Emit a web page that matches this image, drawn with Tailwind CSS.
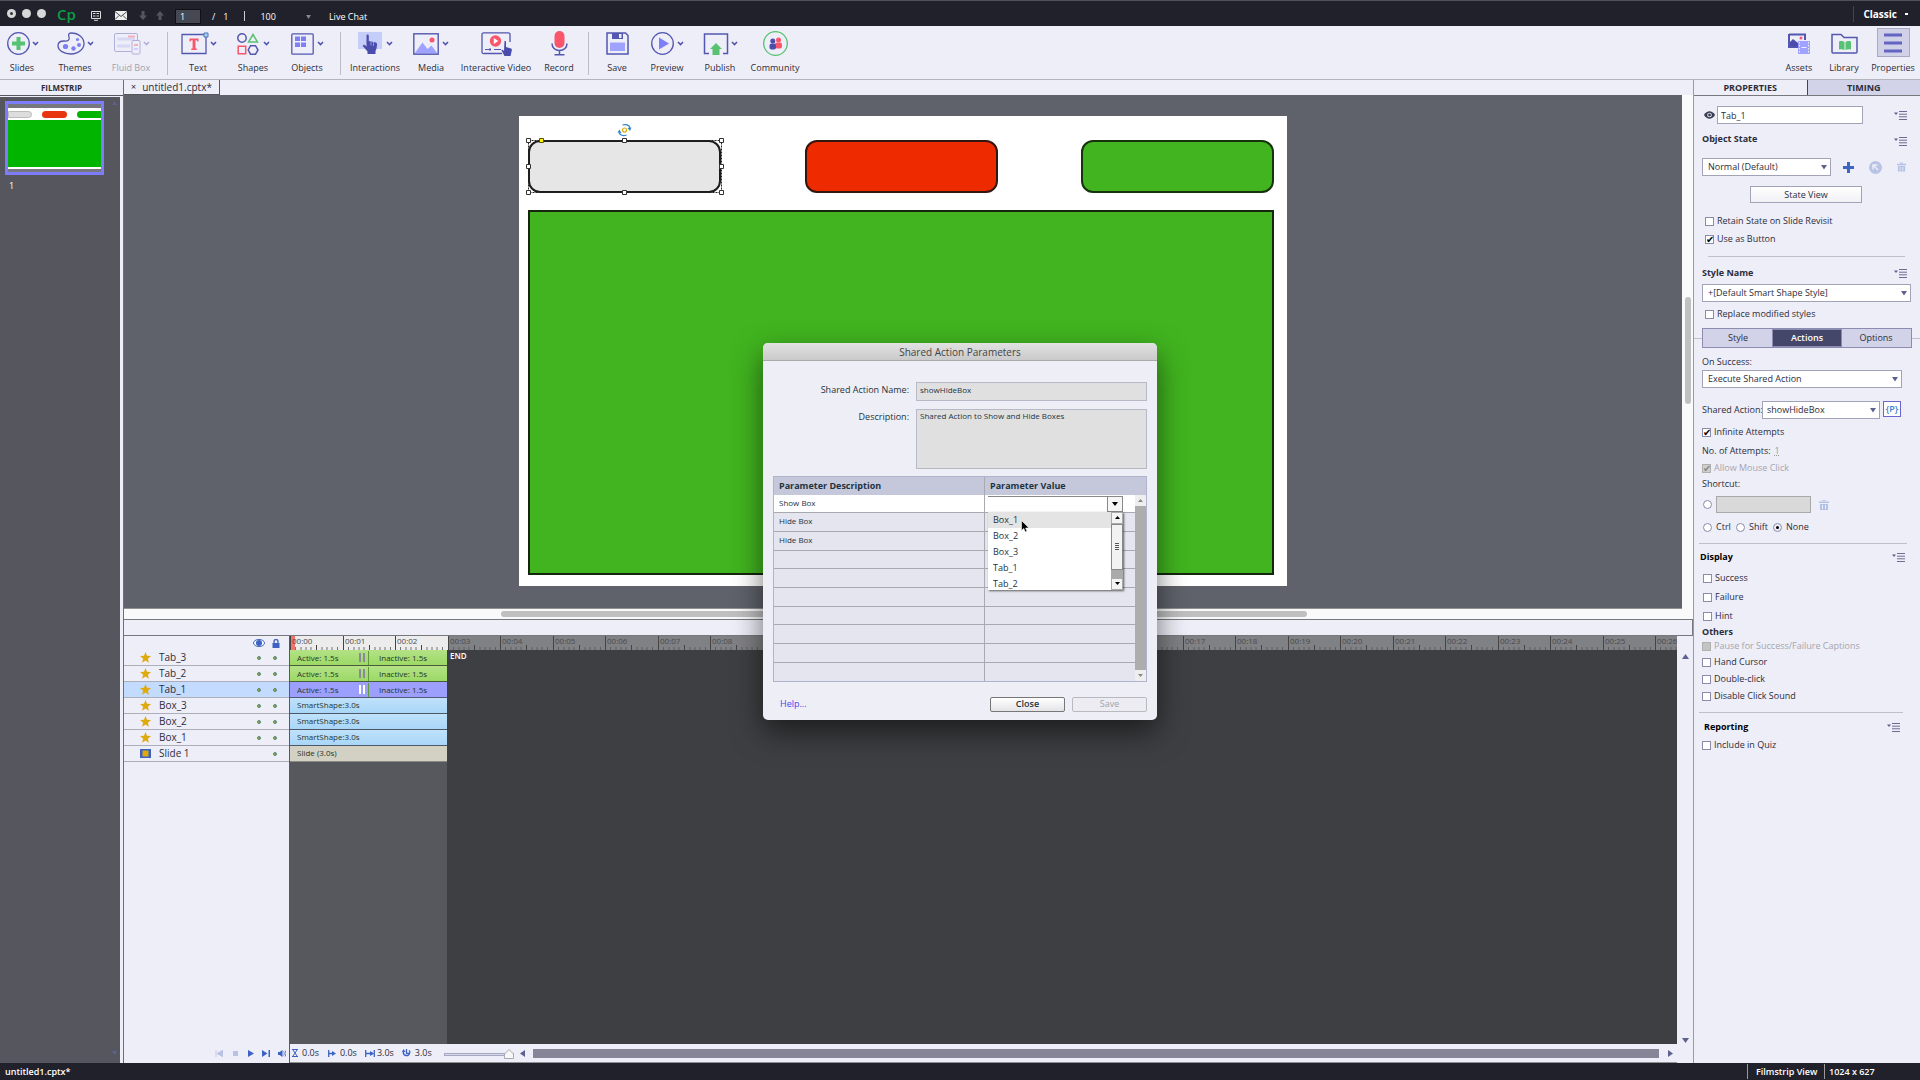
<!DOCTYPE html>
<html lang="en">

<head>
    <meta charset="UTF-8" />
    <title>untitled1.cptx*</title>
    <script src="https://cdn.jsdelivr.net/npm/@tailwindcss/browser@4"></script>
</head>

<body class="h-screen flex flex-col overflow-hidden bg-[#eeeef8] text-[9px] leading-4 text-[#2c2d3a] font-['Open_Sans','Noto_Sans',sans-serif]">

    <!-- shared icons -->
    <svg class="hidden">
        <symbol id="chev" viewBox="0 0 7 5"><path d="M1 1l2.500 2.500L6 1" fill="none" stroke="#5053ae" stroke-width="1.600" /></symbol>
        <symbol id="arrow" viewBox="0 0 6 5"><path d="M0 0h6L3 4.500z" fill="#5d6190" /></symbol>
        <symbol id="panelmenu" viewBox="0 0 13 9"><path d="M0 1.500h4L2 4z" fill="#5d6190" /><path d="M5 .5h8M5 3.200h8M5 5.800h8M5 8.500h8" stroke="#6b6d92" /></symbol>
        <symbol id="trash" viewBox="0 0 10 10"><path d="M0 1.500h10v1.500H0zM3.500 0h3v1h-3zM1 4h8v6H1z" fill="#b3c1e6" /><path d="M3.500 5v4M6.500 5v4" stroke="#eeeef8" /></symbol>
        <symbol id="star" viewBox="0 0 11 11"><path d="M5.500 0l1.500 3.800 4 .3-3.100 2.600 1 4-3.400-2.200-3.400 2.200 1-4L0 4.100l4-.3z" fill="#dfab0b" /></symbol>
    </svg>

    <header class="h-[26px] shrink-0 flex items-center bg-[#20212b] border-t border-[#50525a] text-white">
        <div class="flex gap-1 pl-[7px]">
            <button aria-label="Close" class="size-[9px] rounded-full bg-[#d8d8d8] grid place-items-center"><span class="size-[3px] rounded-full bg-[#333]"></span></button>
            <button aria-label="Minimize" class="size-[9px] rounded-full bg-[#d8d8d8] ml-0.5"></button>
            <button aria-label="Zoom" class="size-[9px] rounded-full bg-[#d8d8d8] ml-0.5"></button>
        </div>
        <span class="ml-[11px] w-[18px] text-[15px] leading-5 font-semibold text-[#0d9c45]">Cp</span>
        <svg class="ml-4 mt-1 w-[10px] h-[10px]" viewBox="0 0 10 10"><path d="M.5.500h9v7h-9z" fill="none" stroke="#ddd" /><path d="M2 2.500h2.500M5.500 2.500H8M2 5h2.500M5.500 5H8" stroke="#ddd" /><path d="M3 9.300h4" stroke="#ddd" /></svg>
        <svg class="ml-[14px] mt-1 w-[12px] h-[9px]" viewBox="0 0 12 9"><path d="M0 0h12v9H0z" fill="#eee" /><path d="M0 .5l6 5 6-5M0 8.500l4-4M12 8.500l-4-4" fill="none" stroke="#20212b" stroke-width=".8" /></svg>
        <svg class="ml-3 mt-1 w-2 h-[9px]" viewBox="0 0 8 9"><path d="M2.500 0h3v4.500H8L4 9 0 4.500h2.500z" fill="#55565c" /></svg>
        <svg class="ml-[9px] mt-1 w-2 h-[9px]" viewBox="0 0 8 9"><path d="M2.500 9h3V4.500H8L4 0 0 4.500h2.500z" fill="#55565c" /></svg>
        <input aria-label="Slide" value="1" class="ml-[11px] mt-1.5 w-[26px] h-[15px] px-1 bg-[#464853] border border-[#111218]" />
        <span class="ml-[11px] mt-1.5">/</span><span class="ml-2 mt-1.5">1</span>
        <span class="ml-4 mt-1 w-px h-[10px] bg-[#ccc]"></span>
        <span class="ml-[15px] mt-1.5">100</span>
        <svg class="ml-[30px] mt-1.5 w-[5px] h-1" viewBox="0 0 6 5"><path d="M0 0h6L3 5z" fill="#888" /></svg>
        <span class="ml-[18px] mt-1.5">Live Chat</span>
        <span class="ml-auto w-px h-4 bg-[#44464f]"></span>
        <button class="ml-[9px] mr-3 flex items-center text-[10px] font-bold">Classic<span class="ml-2 w-[3px] h-0.5 bg-white"></span></button>
    </header>

    <nav class="h-[54px] shrink-0 flex pt-px pb-[3px] border-b border-[#b4b4bd]">
        <button class="w-11 flex flex-col items-center">
            <span class="flex items-center gap-0.5 pl-0.5 h-[35px]"><svg class="w-[23px] h-[23px]" viewBox="0 0 23 23"><circle cx="11.500" cy="11.500" r="10.800" fill="none" stroke="#5457b0" stroke-width="1.300" /><path d="M9.500 5h4v4.500H18v4h-4.500V18h-4v-4.500H5v-4h4.500z" fill="#57c271" /></svg><svg class="w-[7px] h-[5px]"><use href="#chev" /></svg></span>
            <span>Slides</span>
        </button>
        <button class="w-[62px] flex flex-col items-center">
            <span class="flex items-center gap-0.5 h-[35px]"><svg class="w-[28px] h-[23px]" viewBox="0 0 28 23"><path d="M14 1c8 0 13 5 13 10.500S21.500 22 14 22C7 22 1 18.500 1 13.500c0-3.500 3-4.500 6-4.500 4 .5 6-1 5-4-.8-2-.5-4 2-4z" fill="none" stroke="#5457b0" stroke-width="1.300" /><g fill="#7c7ff5"><circle cx="8.500" cy="14.500" r="2.600" /><circle cx="16.500" cy="16.500" r="2.200" /><circle cx="22" cy="13" r="2" /><circle cx="20.500" cy="7.500" r="1.600" /></g></svg><svg class="w-[7px] h-[5px]"><use href="#chev" /></svg></span>
            <span>Themes</span>
        </button>
        <button disabled class="w-[50px] flex flex-col items-center opacity-40">
            <span class="flex items-center gap-0.5 pl-0.5 h-[33px]"><svg class="w-[27px] h-[22px]" viewBox="0 0 27 22"><path d="M17 18.500H2a1.500 1.500 0 0 1-1.500-1.500V2A1.500 1.500 0 0 1 2 .5h20A1.500 1.500 0 0 1 23.500 2v5" fill="none" stroke="#5457b0" /><path d="M3 6h18M3 13h13" stroke="#b7b9f5" stroke-width="3" /><path d="M14 3.500h7" stroke="#f9566b" stroke-width="2" /><rect x="18" y="7.500" width="8" height="13.500" rx="1" fill="#eeeef8" stroke="#5457b0" /><path d="M20 12h4" stroke="#f9566b" stroke-width="2" /><path d="M20 16h4" stroke="#9fa2ff" stroke-width="2" /></svg><svg class="w-[7px] h-[5px]"><use href="#chev" /></svg></span>
            <span>Fluid Box</span>
        </button>
        <span class="ml-[11px] mr-[10px] mt-[5px] w-px h-[43px] bg-[#bcbcc6]"></span>
        <button class="w-10 flex flex-col items-center">
            <span class="flex items-center gap-px pl-0.5 h-[35px]"><svg class="w-[28px] h-[23px]" viewBox="0 0 28 23"><path d="M1 2.500h24v19H1z" fill="none" stroke="#5457b0" stroke-width="1.300" /><path d="M8.500 6.500h9v3h-1l-.7-1.300h-1.300v8.300h1.300v1.500h-5.500v-1.500h1.300V8.200h-1.300L9.500 9.500h-1z" fill="#f9566b" /><path d="M23 1h4v4h-4z" fill="#a9d1f5" stroke="#4f74b4" /></svg><svg class="w-[7px] h-[5px]"><use href="#chev" /></svg></span>
            <span>Text</span>
        </button>
        <button class="w-[70px] flex flex-col items-center">
            <span class="flex items-center gap-1 h-[35px]"><svg class="w-[22px] h-[22px]" viewBox="0 0 22 22" fill="none" stroke-width="1.500"><circle cx="5" cy="5" r="4.200" stroke="#5457b0" /><path d="M16 1.500L20.500 9h-9z" stroke="#57c271" /><path d="M1.200 13.200h7.500v7.500H1.200z" stroke="#f9566b" /><path d="M13.500 12.700h5L21 17l-2.500 4.200h-5L11.200 17z" stroke="#5457b0" /></svg><svg class="w-[7px] h-[5px]"><use href="#chev" /></svg></span>
            <span>Shapes</span>
        </button>
        <button class="w-[38px] flex flex-col items-center">
            <span class="flex items-center gap-[3px] h-[35px]"><svg class="w-[23px] h-[22px]" viewBox="0 0 23 22"><rect x=".8" y=".8" width="21.400" height="20.400" rx="1" fill="none" stroke="#5457b0" stroke-width="1.300" /><path d="M4 3.500h5v4.500H4zM10 3.500h5v4.500h-5zM4 9.500h5V14H4zM10 9.500h5V14h-5z" fill="#7c7ff5" /></svg><svg class="w-[7px] h-[5px]"><use href="#chev" /></svg></span>
            <span>Objects</span>
        </button>
        <span class="ml-[14px] mr-1.5 mt-[5px] w-px h-[43px] bg-[#bcbcc6]"></span>
        <button class="w-14 flex flex-col items-center">
            <span class="flex items-center gap-1 h-[35px]"><svg class="w-[24px] h-[23px]" viewBox="0 0 24 23"><path d="M0 0h24v17H0z" fill="#c5cdf9" /><path d="M8.500 3.500c0-1.500 2.300-1.500 2.300 0V9l7 1.500c.8.300 1.200.8 1.200 1.600 0 3-.5 5-1.500 7V22H9.500v-2.500L5 14.200c-.7-1 .7-2 1.700-1.300l1.800 1.600z" fill="#4a4dab" /><path d="M13 9.500v4M15.500 10v4" stroke="#c5cdf9" stroke-width=".6" /></svg><svg class="w-[7px] h-[5px]"><use href="#chev" /></svg></span>
            <span>Interactions</span>
        </button>
        <button class="w-14 flex flex-col items-center">
            <span class="flex items-center gap-[3px] h-[35px]"><svg class="w-[26px] h-[22px]" viewBox="0 0 26 22"><path d="M1.500 20.500l8-11 5 6.500 4-3.500 6 8z" fill="#9fa2ff" /><circle cx="19" cy="7" r="2.500" fill="#f9566b" /><rect x=".8" y=".8" width="24.400" height="20.400" fill="none" stroke="#5457b0" stroke-width="1.400" /></svg><svg class="w-[7px] h-[5px]"><use href="#chev" /></svg></span>
            <span>Media</span>
        </button>
        <button class="w-[74px] flex flex-col items-center">
            <span class="flex items-center h-[35px]"><svg class="w-[31px] h-[24px]" viewBox="0 0 31 24"><path d="M21 21.500H3A1.500 1.500 0 0 1 1 20V2A1.500 1.500 0 0 1 2.500.8h25A1.500 1.500 0 0 1 29 2v8" fill="none" stroke="#5457b0" stroke-width="1.300" /><circle cx="14.500" cy="9" r="5.700" fill="#f9566b" /><path d="M12.800 6v6l4.500-3z" fill="#fff" /><path d="M4 17.500h6M13 17.500h7M9 16v3" stroke="#5457b0" /><path d="M23.500 9c.8-.3 1.500 0 1.500 1v5l5 1.500c1 .5.800 1 .8 2L29.500 24h-6L20.500 18.500c0-1 1-1 2.500.5z" fill="#4a4dab" /></svg></span>
            <span>Interactive Video</span>
        </button>
        <button class="w-[52px] flex flex-col items-center">
            <span class="flex items-center h-[35px]"><svg class="w-[17px] h-[25px]" viewBox="0 0 17 25"><rect x="3.500" y="0" width="10" height="17" rx="5" fill="#f9566b" /><path d="M1 12.500c0 4 3 7 7.500 7s7.500-3 7.500-7M8.500 19.500V24M3.500 23.800h10" fill="none" stroke="#5457b0" stroke-width="1.500" /></svg></span>
            <span>Record</span>
        </button>
        <span class="mx-[3px] mt-[5px] w-px h-[43px] bg-[#bcbcc6]"></span>
        <button class="w-[50px] flex flex-col items-center">
            <span class="flex items-center h-[35px]"><svg class="w-[23px] h-[23px]" viewBox="0 0 23 23"><path d="M1 1h18.500L22 3.500V22H1z" fill="none" stroke="#5457b0" stroke-width="1.500" /><path d="M6 1h11v6H6z" fill="#5457b0" /><path d="M13 2h2.500v4H13z" fill="#eeeef8" /><path d="M4 10.500h15v8.500H4z" fill="#9fa2ff" /></svg></span>
            <span>Save</span>
        </button>
        <button class="w-[50px] flex flex-col items-center">
            <span class="flex items-center gap-[3px] h-[35px]"><svg class="w-[23px] h-[23px]" viewBox="0 0 23 23"><circle cx="11.500" cy="11.500" r="10.800" fill="none" stroke="#5457b0" stroke-width="1.300" /><path d="M8 5.500v12l10-6z" fill="#7c7ff5" /></svg><svg class="w-[7px] h-[5px]"><use href="#chev" /></svg></span>
            <span>Preview</span>
        </button>
        <button class="w-14 flex flex-col items-center">
            <span class="flex items-center gap-0.5 h-[35px]"><svg class="w-[26px] h-[22px]" viewBox="0 0 26 22"><path d="M6 20.500H1.500V1h23v19.500H20" fill="none" stroke="#5457b0" stroke-width="1.500" /><path d="M13 10l6 6h-2.500v6h-7v-6H7z" fill="#57c271" /></svg><svg class="w-[7px] h-[5px]"><use href="#chev" /></svg></span>
            <span>Publish</span>
        </button>
        <button class="w-[54px] flex flex-col items-center">
            <span class="flex items-center h-[35px]"><svg class="w-[25px] h-[25px]" viewBox="0 0 25 25"><circle cx="12.500" cy="12.500" r="11.800" fill="none" stroke="#57c271" stroke-width="1.300" /><g fill="#f9566b"><circle cx="15.500" cy="9" r="2.500" /><rect x="12" y="11.500" width="7" height="6" rx="2" /></g><g fill="#4a4dab"><circle cx="9.800" cy="10" r="2.500" /><rect x="6.500" y="12.500" width="6.500" height="6" rx="2" /></g></svg></span>
            <span>Community</span>
        </button>
        <button class="ml-auto w-[42px] flex flex-col items-center">
            <span class="flex items-center h-[35px]"><svg class="w-[22px] h-[22px]" viewBox="0 0 22 22"><path d="M1 1.500h16V7M1 1v13h9" fill="none" stroke="#5457b0" stroke-width="2" /><path d="M2 13V9l3-3 5 4v4z" fill="#4a4dab" /><circle cx="13" cy="5" r="1.500" fill="#f9566b" /><path d="M10 8h12v13H10z" fill="#9fa2ff" /><path d="M11.500 9v12M20.500 9v12" stroke="#eeeef8" stroke-dasharray="1.500 1.500" /><path d="M13.500 14.500h5" stroke="#eeeef8" /></svg></span>
            <span>Assets</span>
        </button>
        <button class="w-12 flex flex-col items-center">
            <span class="flex items-center h-[35px]"><svg class="w-[27px] h-[21px]" viewBox="0 0 27 21"><path d="M1 19V1.500h9l3 3h13V19a1 1 0 0 1-1 1H2a1 1 0 0 1-1-1z" fill="none" stroke="#5457b0" stroke-width="1.500" /><path d="M8 8.500c2-.7 4-.7 5.500.5V17c-1.500-1-3.500-1-5.500-.5zM14.500 9c1.500-1.200 3.500-1.200 5.500-.5v8c-2-.5-4-.5-5.500.5z" fill="#57c271" /></svg></span>
            <span>Library</span>
        </button>
        <button class="w-[50px] mr-0.5 pt-px flex flex-col items-center">
            <span class="grid place-items-center w-[33px] h-[31px] mb-[3px] bg-[#d0d0e6] border border-[#a9a9c4]"><svg class="w-[18px] h-[20px]" viewBox="0 0 18 20"><path d="M0 2h18M0 10h18M0 18h18" stroke="#6265c4" stroke-width="3" /></svg></span>
            <span>Properties</span>
        </button>
    </nav>

    <main class="flex-1 min-h-0 flex">

        <!-- filmstrip -->
        <aside class="w-[124px] shrink-0 flex flex-col border-r border-[#6d6d72]">
            <h2 class="h-4 text-center font-bold text-[8px] border-b border-[#55565c]">FILMSTRIP</h2>
            <div class="flex-1 mt-px mr-[3px] pl-[5px] pr-[3px] pt-1 pb-2 bg-[#56565e] flex items-stretch justify-between text-white">
                <div>
                    <div class="w-[99px] h-[74px] border-3 border-[#7d7dfb] bg-[#77787e] pt-1">
                        <div class="bg-white pb-0.5 overflow-hidden">
                            <div class="flex gap-[10px] pt-[3px] pb-0.5">
                                <span class="w-6 h-[7px] rounded-r-sm bg-[#ddd] border border-[#bbb]"></span>
                                <span class="w-[25px] h-[7px] rounded-sm bg-[#e93411]"></span>
                                <span class="flex-1 h-[7px] rounded-l-sm bg-[#00b400]"></span>
                            </div>
                            <div class="h-[47px] bg-[#00b400]"></div>
                        </div>
                    </div>
                    <p class="ml-1 mt-[3px] text-[9px]">1</p>
                </div>
                <div class="w-[5px] flex flex-col justify-between">
                    <svg class="w-[5px] h-1" viewBox="0 0 5 4"><path d="M0 4h5L2.500 0z" fill="#5d6190" /></svg>
                    <svg class="w-[5px] h-1" viewBox="0 0 5 4"><path d="M0 0h5L2.500 4z" fill="#5d6190" /></svg>
                </div>
            </div>
        </aside>

        <div class="flex-1 min-w-0 flex flex-col">
            <div class="h-[15px] shrink-0 flex">
                <button class="w-[96px] pl-[7px] flex items-center gap-1.5 text-[10px] border-r border-b border-[#55565c] whitespace-nowrap"><span class="text-[9px]">×</span>untitled1.cptx*</button>
            </div>

            <!-- stage -->
            <div class="flex bg-[#fafafa] shrink-0">
                <div class="flex-1 flex justify-center pt-[21px] pb-[22px] bg-[#5f626a] border-b border-[#8f9195]">
                    <div class="w-[768px] h-[470px] pl-[9px] pr-[13px] pt-6 pb-[11px] flex flex-col gap-[17px] bg-white">
                        <div class="flex justify-between">
                            <div class="relative w-[193px] h-[53px] rounded-xl bg-[#e6e6e6] border-2 border-[#1c1c1c]">
                                <svg class="absolute -left-1 -top-[19px] w-[198px] h-[72px]" viewBox="0 0 198 72">
                                    <path d="M2.500 17.500h193v52h-193z" fill="none" stroke="#222" stroke-width="1" stroke-dasharray="2 1" />
                                    <g fill="#fff" stroke="#333"><path d="M.5 15.500h4v4h-4zM96.500 15.500h4v4h-4zM193.500 15.500h4v4h-4zM.5 41.500h4v4h-4zM193.500 41.500h4v4h-4zM.5 67.500h4v4h-4zM96.500 67.500h4v4h-4zM193.500 67.500h4v4h-4z" /></g>
                                    <path d="M13.500 15.500h4v4h-4z" fill="#fff200" stroke="#555500" />
                                    <circle cx="98.500" cy="7" r="2" fill="#fff" stroke="#dfab0b" stroke-width="1.200" />
                                    <path d="M93 9.500c1 2.500 4 4 7.500 2.500M104 5C103 2 100 .8 96.500 2" fill="none" stroke="#3084cc" stroke-width="1.300" />
                                    <path d="M91.500 9.500l2-3 2 3.500zM105.500 4.500l-1.500 3.500-2.500-3z" fill="#3084cc" />
                                </svg>
                            </div>
                            <div class="w-[193px] h-[53px] rounded-xl bg-[#ee2a00] border-2 border-[#33170f]"></div>
                            <div class="w-[193px] h-[53px] rounded-xl bg-[#41b41f] border-2 border-[#16330e]"></div>
                        </div>
                        <div class="flex-1 bg-[#41b41f] border-2 border-[#14270d]"></div>
                    </div>
                </div>
                <div class="w-[11px] pt-[202px] pl-[3px]"><div class="w-1.5 h-[107px] rounded-full bg-[#c0c0c0]"></div></div>
            </div>
            <div class="h-[10px] shrink-0 flex items-center justify-center pr-[10px] bg-[#fafafa]"><div class="w-[806px] h-1.5 rounded-full bg-[#bfbfbf]"></div></div>
            <div class="h-[17px] shrink-0 border-y border-r border-[#77787e]"></div>

            <!-- timeline -->
            <section class="flex-1 min-h-0 flex">
                <div class="w-[166px] shrink-0 flex flex-col border-r border-[#a03a3e]">
                    <div class="h-[14px] flex items-center justify-end gap-[7px] pr-[9px]">
                        <svg class="w-3 h-2" viewBox="0 0 12 8"><ellipse cx="6" cy="4" rx="5.500" ry="3.500" fill="#fff" stroke="#3c62c2" /><circle cx="6" cy="4" r="3" fill="#3c62c2" /></svg>
                        <svg class="w-2 h-[9px]" viewBox="0 0 8 9"><path d="M2 4V2.500a2 2 0 0 1 4 0V4" fill="none" stroke="#3c62c2" stroke-width="1.300" /><path d="M.5 4h7v5h-7z" fill="#3c62c2" /></svg>
                    </div>
                    <ul id="layers"></ul>
                    <div class="mt-auto h-5 flex items-center justify-end gap-2 pr-[3px]">
                        <svg class="w-2 h-[7px]" viewBox="0 0 8 7"><path d="M1 0v7M8 0v7L2 3.500z" fill="#b9c1e4" stroke="#b9c1e4" stroke-width=".8" /></svg>
                        <svg class="w-[5px] h-[5px] mx-0.5" viewBox="0 0 5 5"><path d="M0 0h5v5H0z" fill="#b9c1e4" /></svg>
                        <svg class="w-1.5 h-[7px]" viewBox="0 0 6 7"><path d="M0 0v7l6-3.500z" fill="#3c62c2" /></svg>
                        <svg class="w-2 h-[7px]" viewBox="0 0 8 7"><path d="M0 0v7l5.500-3.500zM6.500 0H8v7H6.500z" fill="#3c62c2" /></svg>
                        <svg class="w-2 h-[7px]" viewBox="0 0 8 7"><path d="M0 2h1.500L4.500 0v7L1.500 5H0z" fill="#3c62c2" /><path d="M5.500 1.500c1 1 1 3 0 4M7 .5c1.300 2 1.300 4 0 6" fill="none" stroke="#3c62c2" stroke-width=".8" /></svg>
                    </div>
                </div>

                <div class="flex-1 min-w-0 flex flex-col">
                    <div id="ruler" class="h-[14px] shrink-0 flex overflow-hidden bg-[#808184] text-[8px] leading-[10px] text-[#4a4a4e]"></div>
                    <div class="flex-1 min-h-0 flex bg-[#3e3f42]">
                        <div id="bars" class="w-[157px] bg-[#57585d] text-[8px] leading-[14px] text-[#25352a]"></div>
                        <span class="pl-[3px] text-white text-[8px] font-semibold leading-3">END</span>
                    </div>
                    <div class="h-[19px] shrink-0 flex items-center border-b border-[#8f9195]">
                        <svg class="ml-0.5 w-1.5 h-2" viewBox="0 0 6 8"><path d="M0 .5h6M0 7.500h6M1 1l4 6M5 1L1 7" stroke="#3c62c2" /></svg><span class="ml-1">0.0s</span>
                        <svg class="ml-[9px] w-2 h-[7px]" viewBox="0 0 8 7"><path d="M.7 0v7M1 3.500h4" stroke="#3c62c2" stroke-width="1.300" /><path d="M4 1l4 2.500L4 6z" fill="#3c62c2" /></svg><span class="ml-1">0.0s</span>
                        <svg class="ml-2 w-[10px] h-[7px]" viewBox="0 0 10 7"><path d="M.7 0v7M9.300 0v7M1 3.500h7" stroke="#3c62c2" stroke-width="1.300" /><path d="M5 1l4 2.500L5 6z" fill="#3c62c2" /></svg><span class="ml-0.5">3.0s</span>
                        <svg class="ml-2 w-[9px] h-2" viewBox="0 0 9 8"><path d="M1.500 2.500c-1 4 5.500 6.500 6.300 1 .2-1-.3-1.500-.8-2M4.500 0v4.500H7" fill="none" stroke="#3c62c2" stroke-width="1.300" /><path d="M0 3l1.500-3 2 3z" fill="#3c62c2" /></svg><span class="ml-1">3.0s</span>
                        <div class="relative ml-3 w-[70px] h-4 flex items-center">
                            <span class="w-full h-[3px] mt-0.5 border border-[#a5a6c2] bg-[#d7d8e8]"></span>
                            <input type="range" aria-label="Timeline zoom" value="100" class="absolute inset-0 w-full opacity-0" />
                            <svg class="absolute right-0 top-1 w-[10px] h-[10px]" viewBox="0 0 10 10"><path d="M5 .5l4.500 4.500v4.500h-9V5z" fill="#f7f7f7" stroke="#a9a9b5" /></svg>
                        </div>
                        <svg class="ml-1.5 w-[5px] h-[7px]" viewBox="0 0 5 7"><path d="M5 0v7L0 3.500z" fill="#5d6190" /></svg>
                        <div class="ml-2 flex-1 h-[9px] bg-[#868597]"></div>
                        <svg class="ml-[9px] mr-1 w-[5px] h-[7px]" viewBox="0 0 5 7"><path d="M0 0v7l5-3.500z" fill="#5d6190" /></svg>
                    </div>
                </div>
                <div class="w-4 shrink-0 flex flex-col items-center justify-between pt-[18px] pb-5">
                    <svg class="w-[7px] h-[5px]" viewBox="0 0 7 5"><path d="M0 5h7L3.500 0z" fill="#5d6190" /></svg>
                    <svg class="w-[7px] h-[5px]" viewBox="0 0 7 5"><path d="M0 0h7L3.500 5z" fill="#5d6190" /></svg>
                </div>
            </section>
        </div>

        <!-- properties panel -->
        <aside class="w-[227px] shrink-0 flex flex-col border-l border-[#9a9aa4]">
            <div class="h-4 shrink-0 flex font-bold border-b border-[#77787e]">
                <button class="flex-1">PROPERTIES</button>
                <button class="flex-1 bg-[#d2d2e8] border-l border-[#44464f]">TIMING</button>
            </div>
            <div class="flex-1 flex flex-col pl-2 pr-[13px]">
                <div class="mt-[10px] flex items-center">
                    <svg class="ml-0.5 w-[11px] h-2" viewBox="0 0 11 8"><path d="M0 4c3-5 8-5 11 0-3 5-8 5-11 0z" fill="#3a3c52" /><circle cx="5.500" cy="4" r="2.300" fill="#eeeef8" /><circle cx="5.500" cy="4" r="1.400" fill="#3a3c52" /></svg>
                    <input aria-label="Item name" value="Tab_1" class="ml-0.5 w-[146px] h-[18px] px-[3px] bg-white border border-[#a3a3b8]" />
                    <svg class="ml-auto w-[13px] h-[9px]"><use href="#panelmenu" /></svg>
                </div>
                <div class="mt-[7px] flex items-center justify-between"><h3 class="font-bold">Object State</h3><svg class="w-[13px] h-[9px] mt-1"><use href="#panelmenu" /></svg></div>
                <div class="mt-[11px] flex items-center">
                    <div class="relative">
                        <select aria-label="Object State" class="appearance-none w-[129px] h-[18px] pl-[5px] block bg-white border border-[#a3a3b8]"><option>Normal (Default)</option></select>
                        <svg class="absolute right-1 top-[7px] w-1.5 h-[5px]"><use href="#arrow" /></svg>
                    </div>
                    <svg class="ml-3 w-[11px] h-[11px]" viewBox="0 0 11 11"><path d="M4 0h3v4h4v3H7v4H4V7H0V4h4z" fill="#3c66c4" /></svg>
                    <svg class="ml-[15px] w-[13px] h-[13px]" viewBox="0 0 13 13"><circle cx="6.500" cy="6.500" r="6.500" fill="#b9c3e4" /><path d="M4 8.500V4h4.500M4.300 4.300L9 9" fill="none" stroke="#eeeef8" stroke-width="1.400" /></svg>
                    <svg class="ml-auto mr-px w-[9px] h-[10px]"><use href="#trash" /></svg>
                </div>
                <button class="mt-[10px] ml-12 w-28 h-[17px] leading-[15px] bg-linear-to-b from-white to-[#f1f1f6] border border-[#a3a3b8]">State View</button>
                <label class="mt-[10px] ml-[3px] flex items-center gap-[3px]"><input type="checkbox" class="appearance-none size-[9px] bg-white border border-[#8a8ba8]" />Retain State on Slide Revisit</label>
                <label class="mt-0.5 ml-[3px] flex items-center gap-[3px]"><input type="checkbox" checked class="appearance-none size-[9px] bg-white border border-[#8a8ba8] checked:before:content-['✔'] checked:before:block checked:before:-mt-1 checked:before:leading-[14px] checked:before:text-[10px] before:text-black" />Use as Button</label>
                <div class="mt-[9px] ml-1.5 mr-0.5 h-px bg-[#c0c0cb]"></div>
                <div class="mt-2 flex items-center justify-between"><h3 class="font-bold">Style Name</h3><svg class="w-[13px] h-[9px]"><use href="#panelmenu" /></svg></div>
                <div class="relative mt-[3px] -mr-1">
                    <select aria-label="Style Name" class="appearance-none w-full h-[18px] pl-[5px] block bg-white border border-[#a3a3b8]"><option>+[Default Smart Shape Style]</option></select>
                    <svg class="absolute right-1 top-[7px] w-1.5 h-[5px]"><use href="#arrow" /></svg>
                </div>
                <label class="mt-1 ml-[3px] flex items-center gap-[3px]"><input type="checkbox" class="appearance-none size-[9px] bg-white border border-[#8a8ba8]" />Replace modified styles</label>
                <div class="mt-1.5 -ml-2 -mr-[13px] flex items-center">
                    <span class="w-2 h-px bg-[#c0c0cb]"></span>
                    <div class="flex-1 h-5 flex p-px bg-[#d2d2e8] border border-[#8c8cb0]">
                        <button class="flex-1">Style</button>
                        <button class="flex-1 -my-px bg-[#45476a] text-white font-semibold border border-[#8c8cb0]">Actions</button>
                        <button class="flex-1">Options</button>
                    </div>
                    <span class="w-2 h-px bg-[#c0c0cb]"></span>
                </div>
                <label for="success" class="mt-1.5">On Success:</label>
                <div class="relative mr-[5px]">
                    <select id="success" class="appearance-none w-full h-[18px] pl-[5px] block bg-white border border-[#a3a3b8]"><option>Execute Shared Action</option></select>
                    <svg class="absolute right-1 top-[7px] w-1.5 h-[5px]"><use href="#arrow" /></svg>
                </div>
                <div class="mt-[13px] flex items-center">
                    <label for="shared" class="w-[60px] whitespace-nowrap">Shared Action:</label>
                    <div class="relative">
                        <select id="shared" class="appearance-none w-[118px] h-[18px] pl-1 block bg-white border border-[#a3a3b8]"><option>showHideBox</option></select>
                        <svg class="absolute right-1 top-[7px] w-1.5 h-[5px]"><use href="#arrow" /></svg>
                    </div>
                    <button class="ml-[3px] -mt-0.5 w-[18px] h-4 bg-white border border-[#6a66d0] text-[#3c7fd0] font-semibold leading-3">{P}</button>
                </div>
                <label class="mt-[5px] flex items-center gap-[3px]"><input type="checkbox" checked class="appearance-none size-[9px] bg-white border border-[#8a8ba8] checked:before:content-['✔'] checked:before:block checked:before:-mt-1 checked:before:leading-[14px] checked:before:text-[10px] before:text-black" />Infinite Attempts</label>
                <div class="mt-[3px] flex"><span>No. of Attempts:</span><span class="ml-1 text-[#999] underline decoration-dotted">1</span></div>
                <label class="mt-px flex items-center gap-[3px] text-[#a5a5ad]"><input type="checkbox" checked disabled class="appearance-none size-[9px] bg-[#cfcfcf] border border-[#b0b0b0] checked:before:content-['✔'] checked:before:block checked:before:-mt-1 checked:before:leading-[14px] checked:before:text-[10px] before:text-[#888]" />Allow Mouse Click</label>
                <span>Shortcut:</span>
                <div class="mt-1 flex items-center">
                    <input type="radio" name="key" aria-label="Shortcut key" class="appearance-none ml-px size-[9px] rounded-full bg-white border border-[#8a8ba8]" />
                    <input aria-label="Shortcut" disabled class="ml-1 w-[95px] h-[17px] bg-[#d9d9d9] border border-[#a9a9a9]" />
                    <svg class="ml-2 w-[10px] h-[10px]"><use href="#trash" /></svg>
                </div>
                <div class="mt-1.5 ml-px flex items-center">
                    <label class="flex items-center gap-1 w-[33px]"><input type="radio" name="mod" class="appearance-none size-[9px] rounded-full bg-white border border-[#8a8ba8]" />Ctrl</label>
                    <label class="flex items-center gap-1 w-[37px]"><input type="radio" name="mod" class="appearance-none size-[9px] rounded-full bg-white border border-[#8a8ba8]" />Shift</label>
                    <label class="flex items-center gap-1"><input type="radio" name="mod" checked class="appearance-none size-[9px] rounded-full bg-white border border-[#8a8ba8] checked:bg-black checked:bg-clip-content p-0.5" />None</label>
                </div>
                <div class="mt-2 -ml-[3px] h-px bg-[#c0c0cb]"></div>
                <div class="mt-[5px] -ml-0.5 mr-0.5 flex items-center justify-between"><h3 class="font-bold text-black">Display</h3><svg class="w-[13px] h-[9px]"><use href="#panelmenu" /></svg></div>
                <label class="mt-[5px] ml-px flex items-center gap-[3px]"><input type="checkbox" class="appearance-none size-[9px] bg-white border border-[#8a8ba8]" />Success</label>
                <label class="mt-[3px] ml-px flex items-center gap-[3px]"><input type="checkbox" class="appearance-none size-[9px] bg-white border border-[#8a8ba8]" />Failure</label>
                <label class="mt-[3px] ml-px flex items-center gap-[3px]"><input type="checkbox" class="appearance-none size-[9px] bg-white border border-[#8a8ba8]" />Hint</label>
                <h4 class="font-bold">Others</h4>
                <label class="h-3 flex items-center gap-[3px] text-[#a5a5ad]"><input type="checkbox" disabled class="appearance-none size-[9px] bg-[#c4c4c4] border border-[#b0b0b0]" />Pause for Success/Failure Captions</label>
                <label class="mt-0.5 flex items-center gap-[3px]"><input type="checkbox" class="appearance-none size-[9px] bg-white border border-[#8a8ba8]" />Hand Cursor</label>
                <label class="mt-px flex items-center gap-[3px]"><input type="checkbox" class="appearance-none size-[9px] bg-white border border-[#8a8ba8]" />Double-click</label>
                <label class="mt-px flex items-center gap-[3px]"><input type="checkbox" class="appearance-none size-[9px] bg-white border border-[#8a8ba8]" />Disable Click Sound</label>
                <div class="mt-2 -ml-[3px] mr-1 h-px bg-[#c0c0cb]"></div>
                <div class="mt-1.5 ml-0.5 mr-[7px] flex items-center justify-between"><h3 class="font-bold text-black">Reporting</h3><svg class="w-[13px] h-[9px]"><use href="#panelmenu" /></svg></div>
                <label class="mt-0.5 flex items-center gap-[3px]"><input type="checkbox" class="appearance-none size-[9px] bg-white border border-[#8a8ba8]" />Include in Quiz</label>
            </div>
        </aside>
    </main>

    <footer class="h-[17px] shrink-0 flex items-center bg-[#20212b] text-white font-semibold whitespace-nowrap">
        <span class="pl-[5px]">untitled1.cptx*</span>
        <span class="ml-auto h-[15px] pl-2 w-[77px] border-l border-[#999]">Filmstrip View</span>
        <span class="h-[15px] pl-1 w-24 border-l border-[#999]">1024 x 627</span>
    </footer>

    <!-- shared action dialog -->
    <div role="dialog" aria-labelledby="dlgtitle" class="absolute left-1/2 -translate-x-1/2 top-[343px] w-[394px] h-[377px] rounded-[5px] bg-[#eeeef6] text-[#1d3440] shadow-[0_12px_30px_rgba(0,0,0,0.55)]">
        <h2 id="dlgtitle" class="h-[18px] leading-[18px] rounded-t-[5px] text-center text-[10px] text-[#444] bg-linear-to-b from-[#e2e2e2] to-[#cacaca] border-b border-[#aaa]">Shared Action Parameters</h2>
        <div class="px-[10px]">
            <div class="mt-[21px] flex justify-end">
                <label for="saname" class="mr-[7px]">Shared Action Name:</label>
                <input id="saname" value="showHideBox" readonly class="w-[231px] h-[19px] px-[3px] pb-1 text-[8px] font-medium bg-[#e0e0e0] border border-[#b8b9c6]" />
            </div>
            <div class="mt-2 flex justify-end">
                <label for="sadesc" class="mr-[7px]">Description:</label>
                <textarea id="sadesc" readonly class="block w-[231px] h-[60px] px-[3px] text-[8px] font-medium leading-3 resize-none bg-[#e0e0e0] border border-[#b8b9c6]">Shared Action to Show and Hide Boxes</textarea>
            </div>
            <div class="mt-[7px] flex border border-[#b0b3cc] bg-[#c5c8db]">
                <table class="flex-1 border-separate border-spacing-0 table-fixed leading-3">
                    <thead>
                        <tr class="h-[18px] text-left"><th class="w-[211px] p-0 pl-[5px] border-r border-[#a9aab0]">Parameter Description</th><th class="p-0 pl-[5px]">Parameter Value</th></tr>
                    </thead>
                    <tbody class="bg-[#e5e5ef] text-[8px] font-medium">
                        <tr class="bg-white">
                            <td class="h-[18px] p-0 pb-0.5 pl-[5px] border-r border-b border-[#a9aab0]">Show Box</td>
                            <td class="h-[18px] p-0 pl-[3px] border-b border-[#a9aab0]">
                                <div class="relative flex w-[135px]">
                                    <input aria-label="Show Box value" class="w-[119px] h-4 bg-white border-t border-[#888]" />
                                    <button aria-label="Open list" class="w-4 h-4 grid place-items-center bg-[#f6f6f6] border border-[#888]"><svg class="w-1.5 h-1" viewBox="0 0 6 4"><path d="M0 0h6L3 4z" fill="#000" /></svg></button>
                                    <div class="absolute left-0 top-4 w-[135px] h-[78px] flex bg-white shadow-[1px_1px_2px_rgba(0,0,0,0.6)]">
                                        <ul role="listbox" class="flex-1 overflow-hidden text-[9px] font-normal leading-[15px]">
                                            <li role="option" class="pl-[5px] h-4 bg-[#e4e4e4]">Box_1</li>
                                            <li role="option" class="pl-[5px] h-4">Box_2</li>
                                            <li role="option" class="pl-[5px] h-4">Box_3</li>
                                            <li role="option" class="pl-[5px] h-4">Tab_1</li>
                                            <li role="option" class="pl-[5px] h-[14px]">Tab_2</li>
                                        </ul>
                                        <div class="w-3 flex flex-col bg-[#aaa]">
                                            <span class="h-3 grid place-items-center bg-[#f4f4f4] border border-[#aaa]"><svg class="w-[5px] h-[3px]" viewBox="0 0 5 3"><path d="M0 3h5L2.500 0z" /></svg></span>
                                            <span class="h-[46px] grid place-items-center bg-[#f2f2f2] border border-[#888]"><svg class="w-1 h-2" viewBox="0 0 4 8"><path d="M0 .5h4M0 2.500h4M0 4.500h4M0 6.500h4" stroke="#555" /></svg></span>
                                            <span class="mt-auto h-3 grid place-items-center bg-[#f4f4f4] border border-[#aaa]"><svg class="w-[5px] h-[3px]" viewBox="0 0 5 3"><path d="M0 0h5L2.500 3z" /></svg></span>
                                        </div>
                                        <!-- mouse pointer -->
                                        <svg class="absolute left-[33px] top-2 w-[9px] h-[13px]" viewBox="0 0 9 13"><path d="M.5.500v10l2.300-2 1.500 3.500 1.700-.8L4.600 8H8z" fill="#000" stroke="#fff" stroke-width=".6" /></svg>
                                    </div>
                                </div>
                            </td>
                        </tr>
                        <tr><td class="h-[19px] p-0 pb-0.5 pl-[5px] border-r border-b border-[#a9aab0]">Hide Box</td><td class="p-0 border-b border-[#a9aab0]"></td></tr>
                        <tr><td class="h-[19px] p-0 pb-0.5 pl-[5px] border-r border-b border-[#a9aab0]">Hide Box</td><td class="p-0 border-b border-[#a9aab0]"></td></tr>
                        <tr><td class="h-[18px] p-0 border-r border-b border-[#a9aab0]"></td><td class="p-0 border-b border-[#a9aab0]"></td></tr>
                        <tr><td class="h-[19px] p-0 border-r border-b border-[#a9aab0]"></td><td class="p-0 border-b border-[#a9aab0]"></td></tr>
                        <tr><td class="h-[19px] p-0 border-r border-b border-[#a9aab0]"></td><td class="p-0 border-b border-[#a9aab0]"></td></tr>
                        <tr><td class="h-[18px] p-0 border-r border-b border-[#a9aab0]"></td><td class="p-0 border-b border-[#a9aab0]"></td></tr>
                        <tr><td class="h-[19px] p-0 border-r border-b border-[#a9aab0]"></td><td class="p-0 border-b border-[#a9aab0]"></td></tr>
                        <tr><td class="h-[19px] p-0 border-r border-b border-[#a9aab0]"></td><td class="p-0 border-b border-[#a9aab0]"></td></tr>
                        <tr><td class="h-[18px] p-0 border-r border-[#a9aab0]"></td><td class="p-0"></td></tr>
                    </tbody>
                </table>
                <div class="w-[11px] mt-[18px] flex flex-col justify-between bg-[#adadad]">
                    <span class="h-[11px] grid place-items-center bg-[#eee]"><svg class="w-[5px] h-[3px]" viewBox="0 0 5 3"><path d="M0 3h5L2.500 0z" fill="#888" /></svg></span>
                    <span class="h-[11px] grid place-items-center bg-[#eee]"><svg class="w-[5px] h-[3px]" viewBox="0 0 5 3"><path d="M0 0h5L2.500 3z" fill="#888" /></svg></span>
                </div>
            </div>
            <div class="mt-[14px] flex items-center">
                <a href="#" class="pl-[7px] text-[#4545f0]">Help...</a>
                <button class="ml-auto w-[75px] h-[15px] rounded-xs bg-linear-to-b from-white to-[#e4e4e8] border border-[#777] font-semibold leading-3">Close</button>
                <button disabled class="ml-[7px] w-[75px] h-[15px] rounded-xs bg-[#ececf2] border border-[#b9b9c0] text-[#9fa4ab] leading-3">Save</button>
            </div>
        </div>
    </div>

    <script>
        const layers = ['Tab_3', 'Tab_2', 'Tab_1', 'Box_3', 'Box_2', 'Box_1', 'Slide 1'];
        const dot = '<span class="size-1 rounded-full bg-[#b5a21c] border border-[#4a8a86]"></span>';

        document.getElementById('layers').innerHTML = layers.map((name) => {
            const slide = name === 'Slide 1';
            const bg = name === 'Tab_1' ? 'bg-[#c2dbff]' : '';
            const icon = slide
                ? '<svg class="w-[11px] h-[9px]" viewBox="0 0 11 9"><path d="M0 0h11v9H0z" fill="#3c62c2" /><path d="M2.500 1.500h6v6h-6z" fill="#dfab0b" /></svg>'
                : '<svg class="w-[11px] h-[11px]"><use href="#star" /></svg>';
            return `<li class="h-4 flex items-center pl-4 pr-3 text-[10px] leading-[15px] border-b border-[#aeaeb8] ${bg}">${icon}<span class="ml-2 mr-auto">${name}</span>${slide ? '' : dot}<span class="w-3"></span>${dot}</li>`;
        }).join('');

        document.getElementById('bars').innerHTML = layers.map((name) => {
            if (name === 'Slide 1') return '<div class="h-4 pl-[7px] bg-[#d3d1c4] border-b border-[#8a8a85]">Slide (3.0s)</div>';
            if (name.startsWith('Box')) return '<div class="h-4 pl-[7px] bg-linear-to-b from-[#bfe1fb] to-[#a9d6f8] border-b border-[#4d5a66]">SmartShape:3.0s</div>';
            const look = name === 'Tab_1' ? 'bg-[#9c9ffb] border-[#55567c]' : 'bg-linear-to-b from-[#b3e285] to-[#9cd965] border-[#4a5a3a]';
            const grip = name === 'Tab_1' ? 'border-white' : 'border-[#8a8a9c]';
            return `<div class="h-4 flex items-center pl-[7px] border-b ${look}"><span class="w-[62px]">Active: 1.5s</span><span class="w-1.5 h-[9px] border-x-2 ${grip}"></span><span class="ml-[3px] pl-[10px] h-[14px] border-l border-[#5f9a38]">Inactive: 1.5s</span></div>`;
        }).join('');

        // one cell per second, cells alternate 53 and 52 px wide
        document.getElementById('ruler').innerHTML = Array.from({ length: 27 }, (_, i) => {
            const width = i % 2 ? 'w-[52px]' : 'w-[53px]';
            const bg = i < 3 ? 'bg-[#ececec]' : '';
            const mark = i ? '' : '<path d="M0 0h5v14H0z" fill="#f2726c" />';
            return `<div class="relative h-[14px] shrink-0 ${width} ${bg}"><svg class="absolute inset-0 w-[53px] h-[14px]" viewBox="0 0 53 14">${mark}<path d="M.5 0v14M26.500 9v5" stroke="#444" /><path d="M5.500 11v3M11 11v3M16 11v3M21 11v3M32 11v3M37 11v3M42 11v3M47.500 11v3" stroke="#555" stroke-width=".8" /></svg><span class="relative block pl-0.5">00:${String(i).padStart(2, '0')}</span></div>`;
        }).join('');
    </script>
</body>

</html>
